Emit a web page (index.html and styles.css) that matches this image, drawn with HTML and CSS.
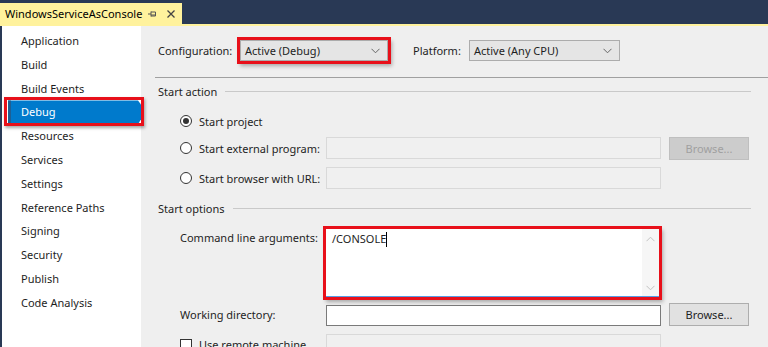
FILE: index.html
```html
<!DOCTYPE html>
<html>
<head>
<meta charset="utf-8">
<link rel="stylesheet" href="styles.css">
</head>
<body>
<div class="topbar">
  <div class="tab">
    <span class="tab-title">WindowsServiceAsConsole</span>
    <svg class="pin" width="10" height="10" viewBox="0 0 10 10"><path d="M1 5h3M4 2.5v5M4 3h4.5v4H4M4 6h4.5" fill="none" stroke="#555" stroke-width="1"/></svg>
    <svg class="close" width="10" height="10" viewBox="0 0 10 10"><path d="M1.5 1.5l7 7M8.5 1.5l-7 7" stroke="#444" stroke-width="1.3"/></svg>
  </div>
</div>
<div class="accent"></div>
<div class="main">
  <nav class="sidebar">
    <div class="nav-item">Application</div>
    <div class="nav-item">Build</div>
    <div class="nav-item">Build Events</div>
    <div class="nav-item active"><span class="nav-fill">Debug</span></div>
    <div class="nav-item">Resources</div>
    <div class="nav-item">Services</div>
    <div class="nav-item">Settings</div>
    <div class="nav-item">Reference Paths</div>
    <div class="nav-item">Signing</div>
    <div class="nav-item">Security</div>
    <div class="nav-item">Publish</div>
    <div class="nav-item">Code Analysis</div>
  </nav>
  <section class="content">
    <div class="config-row">
      <span class="cfg-label">Configuration:</span>
      <div class="select select-config highlight">
        <span>Active (Debug)</span>
        <svg width="9" height="6" viewBox="0 0 9 6"><path d="M0.5 0.8l4 4 4-4" fill="none" stroke="#666" stroke-width="1"/></svg>
      </div>
      <span class="plat-label">Platform:</span>
      <div class="select select-platform">
        <span>Active (Any CPU)</span>
        <svg width="9" height="6" viewBox="0 0 9 6"><path d="M0.5 0.8l4 4 4-4" fill="none" stroke="#666" stroke-width="1"/></svg>
      </div>
    </div>
    <div class="top-sep"></div>

    <div class="group-head head-action"><span>Start action</span><div class="rule"></div></div>

    <div class="row row-project">
      <label class="radio-label"><span class="radio checked"></span>Start project</label>
    </div>
    <div class="row row-ext">
      <label class="radio-label"><span class="radio"></span>Start external program:</label>
      <div class="input disabled"></div>
      <div class="button disabled">Browse...</div>
    </div>
    <div class="row row-url">
      <label class="radio-label"><span class="radio"></span>Start browser with URL:</label>
      <div class="input disabled"></div>
    </div>

    <div class="group-head head-options"><span>Start options</span><div class="rule"></div></div>

    <div class="row row-args">
      <span class="field-label">Command line arguments:</span>
      <div class="textarea highlight">
        <span class="typed">/CONSOLE</span><span class="caret"></span>
        <div class="scroll">
          <svg width="9" height="6" viewBox="0 0 9 6"><path d="M0.5 5.2l4-4 4 4" fill="none" stroke="#c2c2c2" stroke-width="1"/></svg>
          <svg width="9" height="6" viewBox="0 0 9 6"><path d="M0.5 0.8l4 4 4-4" fill="none" stroke="#c2c2c2" stroke-width="1"/></svg>
        </div>
      </div>
    </div>
    <div class="row row-dir">
      <span class="field-label">Working directory:</span>
      <div class="input"></div>
      <div class="button">Browse...</div>
    </div>
    <div class="row row-remote">
      <label class="check-label"><span class="checkbox"></span>Use remote machine</label>
      <div class="input disabled"></div>
    </div>
  </section>
</div>
</body>
</html>
```

FILE: styles.css
```css
* { box-sizing: border-box; }
html, body {
  margin: 0;
  padding: 0;
  width: 768px;
  height: 347px;
  overflow: hidden;
  background: #293955;
  font-family: "Segoe UI", "Noto Sans", "Open Sans", sans-serif;
  font-size: 11px;
  color: #1e1e1e;
}
.topbar {
  height: 24px;
  background: #293955;
  display: flex;
  align-items: flex-end;
}
.tab {
  height: 21px;
  width: 182px;
  background: #fff29d;
  display: flex;
  align-items: center;
  padding-left: 5px;
  padding-right: 6px;
  color: #000;
  font-size: 11px;
}
.tab-title { flex: 1; }
.pin { margin-right: 9px; }
.accent {
  height: 2px;
  background: #fff29d;
}
.main {
  display: flex;
  height: 321px;
  border-left: 2px solid #293955;
}
.sidebar {
  width: 139px;
  background: #ffffff;
  padding-top: 3px;
  flex-shrink: 0;
}
.nav-item {
  height: 23.8px;
  line-height: 23.8px;
  padding-left: 19px;
}
.nav-item.active {
  position: relative;
  padding-left: 6px;
  color: #fff;
}
.nav-fill {
  display: block;
  height: 100%;
  background: #007acc;
  border-left: 3px solid #1f5f93;
  padding-left: 10px;
  clip-path: polygon(0 0, calc(100% - 3px) 0, 100% 4px, 100% calc(100% - 5px), calc(100% - 3px) 100%, 0 100%);
}
.nav-item.active::after {
  content: "";
  position: absolute;
  left: 2px;
  right: -3px;
  top: -3px;
  bottom: -2px;
  border: 3px solid #e8101a;
  box-shadow: 1px 2px 3px rgba(0,0,0,0.35);
}
.content {
  flex: 1;
  background: #efefef;
  padding-left: 17px;
  padding-right: 17px;
  display: flex;
  flex-direction: column;
}
.content > * { flex-shrink: 0; }
.config-row {
  margin-top: 14px;
  height: 21px;
  display: flex;
  align-items: center;
}
.cfg-label { width: 82px; }
.plat-label { width: 56px; margin-left: 25px; }
.select {
  height: 21px;
  background: #e5e5e5;
  border: 1px solid #acacac;
  display: flex;
  align-items: center;
  justify-content: space-between;
  padding: 0 7px 0 4px;
}
.select-config { width: 148px; }
.select-platform { width: 151px; }
.highlight {
  outline: 3px solid #e8101a;
  outline-offset: 0px;
  box-shadow: 2px 3px 4px 2px rgba(0,0,0,0.3);
}
.top-sep {
  margin-top: 16px;
  margin-left: -3px;
  margin-right: -17px;
  height: 1px;
  background: #a0a0a0;
}
.group-head {
  display: flex;
  align-items: center;
  height: 16px;
}
.group-head .rule {
  flex: 1;
  height: 1px;
  background: #c9c9c9;
  margin-left: 8px;
}
.head-action { margin-top: 5px; }
.head-options { margin-top: 11px; }
.row {
  display: flex;
  align-items: center;
  padding-left: 22px;
}
.row-project { margin-top: 11px; height: 22px; }
.row-ext { margin-top: 5px; height: 22px; }
.row-url { margin-top: 8px; height: 22px; }
.row-args { margin-top: 13px; align-items: flex-start; }
.row-dir { margin-top: 6px; height: 23px; }
.row-remote { margin-top: 8px; height: 22px; align-items: flex-start; }
.radio-label, .field-label, .check-label {
  width: 146px;
  display: flex;
  align-items: center;
  flex: 0 0 auto;
}
.row-args .field-label { margin-top: 1px; }
.radio {
  width: 12px;
  height: 12px;
  border: 1px solid #333;
  border-radius: 50%;
  background: #fff;
  margin-right: 7px;
  position: relative;
}
.radio.checked::after {
  content: "";
  position: absolute;
  left: 2px;
  top: 2px;
  width: 6px;
  height: 6px;
  border-radius: 50%;
  background: #333;
}
.checkbox {
  width: 12px;
  height: 12px;
  border: 1px solid #333;
  background: #fff;
  margin-right: 7px;
}
.check-label { margin-top: 3px; }
.input {
  width: 335px;
  height: 22px;
  background: #fff;
  border: 1px solid #7a7a7a;
}
.row-dir .input { height: 21px; align-self: flex-end; }
.input.disabled {
  background: #f0f0f0;
  border-color: #d9d9d9;
}
.button {
  width: 80px;
  height: 23px;
  margin-left: 8px;
  background: #e1e1e1;
  border: 1px solid #adadad;
  display: flex;
  align-items: center;
  justify-content: center;
}
.button.disabled {
  background: #cccccc;
  border-color: #bfbfbf;
  color: #a0a0a0;
}
.textarea {
  width: 333px;
  height: 68px;
  background: #fff;
  border-bottom: 1px solid #569de5;
  position: relative;
  padding: 2px 6px;
  display: flex;
  align-items: flex-start;
}
.typed { line-height: 16px; }
.caret {
  width: 1px;
  height: 15px;
  background: #000;
  margin-top: 1px;
}
.scroll {
  position: absolute;
  right: 0;
  top: 0;
  bottom: 0;
  width: 17px;
  background: #f6f6f6;
  display: flex;
  flex-direction: column;
  justify-content: space-between;
  align-items: center;
  padding: 7px 0 5px;
}
```
